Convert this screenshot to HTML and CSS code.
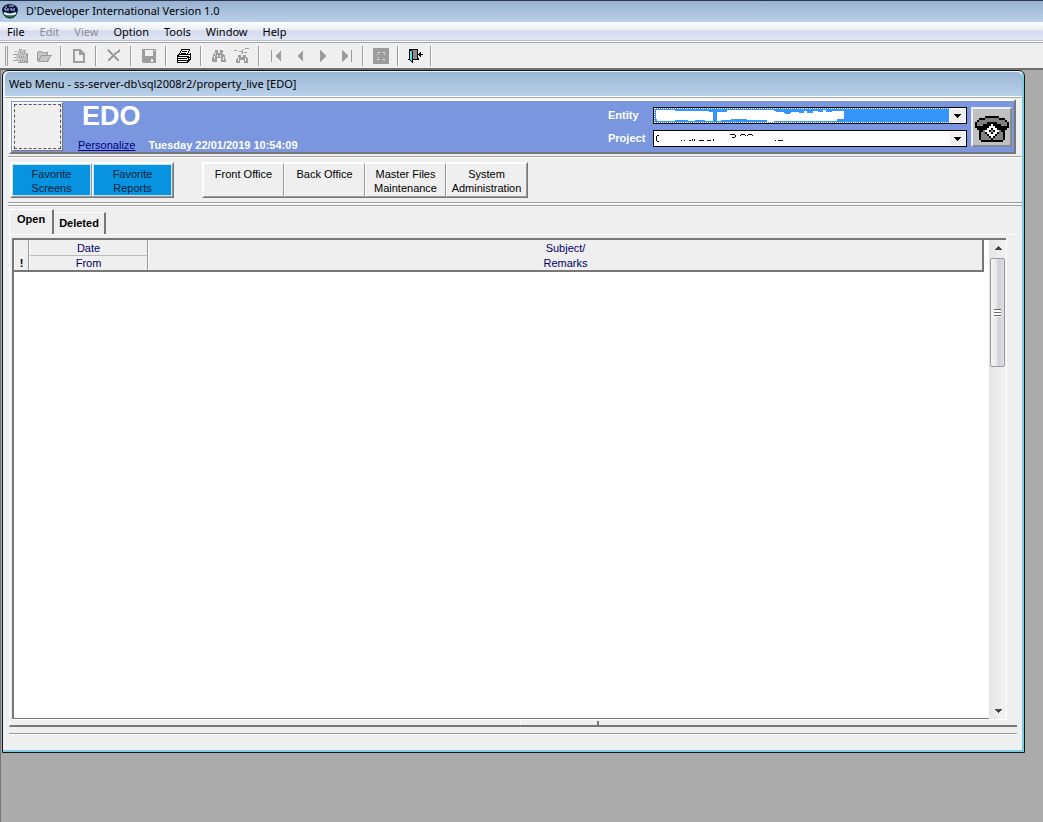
FILE: index.html
```html
<!DOCTYPE html>
<html lang="en">

<head>
  <meta charset="UTF-8">
  <title>D'Developer International Version 1.0</title>
  <link rel="stylesheet" href="styles.css">
</head>

<body>
  <header class="titlebar">
    <svg class="app-icon" width="18" height="16" viewBox="0 0 18 16">
      <ellipse cx="9" cy="7" rx="8" ry="6" fill="#0c1440"></ellipse>
      <path d="M2 10 Q9 15 16 10 Q14 15 9 15 Q4 15 2 10" fill="#1d7a45" stroke="#122" stroke-width="1"></path>
      <path d="M3 10 Q9 13 15 10" stroke="#e8f2fa" stroke-width="2" fill="none"></path>
      <path d="M4 4h2M8 3h5M3 6h2v2M7 5v3M9 6h2v2M13 5v3" stroke="#c3d8f5" fill="none"></path>
    </svg>
    <h1 class="titlebar__text">D'Developer International Version 1.0</h1>
  </header>

  <nav class="menubar">
    <button class="menubar__item">File</button>
    <button class="menubar__item" disabled>Edit</button>
    <button class="menubar__item" disabled>View</button>
    <button class="menubar__item">Option</button>
    <button class="menubar__item">Tools</button>
    <button class="menubar__item">Window</button>
    <button class="menubar__item">Help</button>
  </nav>

  <div class="toolbar">
    <span class="toolbar__grip"></span>
    <div class="toolbar__group">
      <button class="tool" aria-label="Run" disabled>
        <svg class="icon" viewBox="0 0 16 16">
          <path class="soft" d="M5 2h5v1h3v2h2v9H6v-1H4v-2H3V6h2z"></path>
          <path class="line" d="M2 3.5h2M0 6.5h4M1 9.5h2M0 12.5h5M6 1.5h3M5.5 5v2M7.5 3v2M9.5 5v2M11.5 4v2M13.5 6v2M6.5 8v2M8.5 8v2M10.5 8v2M12.5 9v2M7.5 12v2M9.5 11v2M11.5 12v2M13.5 12v2M5 14.5h10M10 2.5h3M14.5 5v9"></path>
        </svg>
      </button>
      <button class="tool" aria-label="Open" disabled>
        <svg class="icon" viewBox="0 0 16 16">
          <path class="soft" d="M1 4h4l1 1h5v3h4l-3 5H2z"></path>
          <path class="line" d="M1.5 13V4.5l1-1h3l1 1h4.500V7M2 13.5h9.500L15 7.500H5.500L2 13"></path>
        </svg>
      </button>
    </div>
    <div class="toolbar__group">
      <button class="tool" aria-label="New" disabled>
        <svg class="icon" viewBox="0 0 16 16"><path class="line heavy" d="M3 2h6l4 4v8H3zM9 2v4h4"></path></svg>
      </button>
    </div>
    <div class="toolbar__group">
      <button class="tool" aria-label="Delete" disabled>
        <svg class="icon" viewBox="0 0 16 16"><path class="line heavy" d="M2 2l6 6l5 5M14 2L8 7l-6 6"></path></svg>
      </button>
    </div>
    <div class="toolbar__group">
      <button class="tool" aria-label="Save" disabled>
        <svg class="icon" viewBox="0 0 16 16">
          <path class="solid" d="M1 1h14v14H2l-1-1z"></path>
          <path fill="#efefef" d="M4 2h8v6H4zM10 11h2v3h-2zM13 2h1v1h-1z"></path>
        </svg>
      </button>
    </div>
    <div class="toolbar__group">
      <button class="tool" aria-label="Print">
        <svg class="icon" viewBox="0 0 16 16">
          <path fill="#fff" stroke="#000" d="M5.500 1.500h8l-2 5h-8zM2.500 6.500h12v5h-2l-2 3h-9v-6z"></path>
          <path fill="none" stroke="#000" d="M6 3.500h5M5 5.500h5M1 8.500h11M2 10.500h9M2 12.500h9M12.500 8v5M14.500 5v6M11 14.500l4-4"></path>
          <path fill="#000" d="M3 14h9v1H3zM11 9h4v1h-4z"></path>
        </svg>
      </button>
    </div>
    <div class="toolbar__group">
      <button class="tool" aria-label="Find" disabled>
        <svg class="icon" viewBox="0 0 16 16">
          <path class="solid" d="M4 2h3v3h2V2h3v3l2 3 1 6h-5v-4H6v4H1v-3l1-4 2-3z"></path>
          <path fill="#efefef" d="M4 5h1v2H4zM3 8h1v3H3zM6 7h1v2H6zM9 7h1v2H9zM12 9h1v3h-1zM11 5h1v1h-1z"></path>
        </svg>
      </button>
      <button class="tool" aria-label="Find next" disabled>
        <svg class="icon" viewBox="0 0 16 16">
          <path class="solid" d="M4 7h3v2h2V7h3v2l2 2v4h-4v-3H6v3H2v-4l2-2z"></path>
          <path fill="#efefef" d="M4 10h1v3H4zM11 10h1v3h-1z"></path>
          <path class="line" d="M0 2.500h3M5 3.500h4M9 1.500h1M11 .500h4M7 5.500h2M8.500 2v4M10 4.500h3"></path>
        </svg>
      </button>
    </div>
    <div class="toolbar__group">
      <button class="tool" aria-label="First" disabled>
        <svg class="icon" viewBox="0 0 16 16"><path class="solid" d="M2 2h1v12H2zM12 2v12L6 8z"></path></svg>
      </button>
      <button class="tool" aria-label="Previous" disabled>
        <svg class="icon" viewBox="0 0 16 16"><path class="solid" d="M11 2v12L5 8z"></path></svg>
      </button>
      <button class="tool" aria-label="Next" disabled>
        <svg class="icon" viewBox="0 0 16 16"><path class="solid" d="M5 2v12l6-6z"></path></svg>
      </button>
      <button class="tool" aria-label="Last" disabled>
        <svg class="icon" viewBox="0 0 16 16"><path class="solid" d="M4 2v12l6-6zM13 2h1v12h-1z"></path></svg>
      </button>
    </div>
    <div class="toolbar__group">
      <button class="tool" aria-label="Options" disabled>
        <svg class="icon" viewBox="0 0 16 16">
          <path class="solid" d="M0 0h16v16H0z"></path>
          <path fill="#efefef" d="M5 4h2v1H5zM10 4h2v1h-2zM4 6h1v1H4zM11 6h1v1h-1zM5 9h1v1H5zM4 11h2v1H4zM10 11h2v1h-2z"></path>
        </svg>
      </button>
    </div>
    <div class="toolbar__group">
      <button class="tool" aria-label="Exit">
        <svg class="icon" viewBox="0 0 16 16">
          <path fill="#8b8b8b" stroke="#000" d="M2.500 1.500h7v10h-7z"></path>
          <path fill="#4de0df" stroke="#000" d="M1.500 1.500l3 2v11l-3-3z"></path>
          <path fill="#000" d="M0 11h2v1H0zM10 6h5v1h-5zM11 5h1v3h-1zM12 4h1v5h-1zM9 10h2v2H9z"></path>
        </svg>
      </button>
    </div>
  </div>

  <main class="workspace">
    <section class="window">
      <h2 class="window__title">Web Menu - ss-server-db\sql2008r2/property_live [EDO]</h2>

      <div class="banner">
        <button class="banner__photo" aria-label="Photo"></button>
        <div class="banner__user">
          <div class="banner__name">EDO</div>
          <div class="banner__info">
            <a class="banner__link" href="#">Personalize</a>
            <time class="banner__time" datetime="2019-01-22T10:54:09">Tuesday 22/01/2019 10:54:09</time>
          </div>
        </div>
        <div class="pickers">
          <label class="pickers__label" for="entity">Entity</label>
          <div class="picker">
            <select class="picker__select picker__select--active" id="entity"><option></option></select>
            <svg class="picker__mark" width="294" height="13" viewBox="0 0 294 13">
              <path fill="#fff" d="M1 1H20V2H54V3H58V12H50V11H40V12H33V11H20V12H2V10H1zM62 3H72V1H118L122 3H128L131 5H134L137 3H142L145 4H149V2H152V4H158V2H163V3H168V1H171V3H177V2H189V10H182V12H119V13H112V11H92V10H76V11H66V12H62z"></path>
            </svg>
            <svg class="picker__arrow" width="15" height="13" viewBox="0 0 15 13"><path d="M4 5h7v1h-1v1H9v1H8v1H7V8H6V7H5V6H4z"></path></svg>
          </div>
          <label class="pickers__label" for="project">Project</label>
          <div class="picker">
            <select class="picker__select" id="project"><option></option></select>
            <svg class="picker__mark" width="294" height="13" viewBox="0 0 294 13">
              <path fill="#000" d="M2 3h2v1H2zM1 4h1v5H1zM2 9h2v1H2zM26 8h1v1h-1zM29 8h1v1h-1zM34 8h2v1h-2zM37 7h1v2h-1zM39 7h1v2h-1zM44 8h5v1h-5zM52 8h4v1h-4zM58 7h1v2h-1zM75 2h5v1h-5zM80 3h1v2h-1zM77 5h3v1h-3zM86 2h4v1h-4zM85 3h1v1h-1zM90 3h1v1h-1zM93 2h4v1h-4zM92 3h1v1h-1zM97 3h1v1h-1zM120 8h1v1h-1zM123 8h5v1h-5z"></path>
            </svg>
            <svg class="picker__arrow" width="15" height="13" viewBox="0 0 15 13"><path d="M4 5h7v1h-1v1H9v1H8v1H7V8H6V7H5V6H4z"></path></svg>
          </div>
        </div>
        <button class="banner__phone" aria-label="Telephone">
          <svg width="34" height="26" viewBox="0 0 17 13">
            <path d="M5 0h7v1h3v1h1v1h1v3h-1v1h-1v5h-1v1H3v-1H2V7H1V6H0V3h1V2h1V1h3z"></path>
            <path fill="#808080" d="M5 1h7v1h3v1h1v2h-3V4h-2V3H6v1H4v1H1V3h1V2h3zM3 8h1V7h1v2h1v1h1v1h1v1H3zM14 8h-1V7h-1v2h-1v1h-1v1H9v1h5z"></path>
            <path fill="#fff" d="M8 4h1v1h1v1h1v1h1v1h-1v1h-1v1H9v1H8v-1H7V9H6V8H5V7h1V6h1V5h1z"></path>
            <path d="M8 6h1v1h1v1H9v1H8V8H7V7h1z"></path>
            <path fill="#aaa" d="M8 7h1v1H8z"></path>
          </svg>
        </button>
      </div>

      <div class="shortcuts">
        <div class="button-row">
          <button class="shortcut shortcut--blue">Favorite<br>Screens</button>
          <button class="shortcut shortcut--blue">Favorite<br>Reports</button>
        </div>
        <div class="button-row">
          <button class="shortcut">Front Office</button>
          <button class="shortcut">Back Office</button>
          <button class="shortcut">Master Files<br>Maintenance</button>
          <button class="shortcut">System<br>Administration</button>
        </div>
      </div>

      <div class="messages">
        <div class="tabs" role="tablist">
          <button class="tab tab--active" role="tab" aria-selected="true">Open</button>
          <button class="tab" role="tab" aria-selected="false">Deleted</button>
        </div>
        <div class="pane">
          <div class="grid">
            <div class="grid__body">
              <table class="grid__table">
                <thead>
                  <tr>
                    <th class="flag" rowspan="2">!</th>
                    <th class="date">Date</th>
                    <th>Subject/</th>
                  </tr>
                  <tr>
                    <th class="date date--from">From</th>
                    <th>Remarks</th>
                  </tr>
                </thead>
              </table>
            </div>
            <div class="scrollbar">
              <svg width="8" height="4" viewBox="0 0 8 4"><path fill="#444" d="M0 4l4-4 4 4z"></path></svg>
              <div class="scrollbar__thumb"></div>
              <svg class="scrollbar__down" width="8" height="4" viewBox="0 0 8 4"><path fill="#444" d="M0 0l4 4 4-4z"></path></svg>
            </div>
          </div>
          <div class="pane__ticks"></div>
        </div>
      </div>

      <footer class="status"></footer>
    </section>
  </main>
</body>

</html>
```
FILE: styles.css
```css
* {
  box-sizing: border-box;
}

body {
  background-color: #ababab;
  color: #000;
  display: flex;
  flex-direction: column;
  font-family: "Liberation Sans", Arial, sans-serif;
  font-size: 11px;
  line-height: 14px;
  margin: 0;
  min-height: 100vh;
}

button {
  background: none;
  border: 0;
  color: inherit;
  font: inherit;
  margin: 0;
  padding: 0;
}

svg {
  display: block;
  shape-rendering: crispEdges;
}

/* application frame */

.titlebar {
  align-items: center;
  background: linear-gradient(#98b2d1, #b9d0ea);
  border-top: 1px solid #26344c;
  display: flex;
  gap: 7px;
  height: 22px;
  padding: 0 1px 2px;
}

.app-icon {
  shape-rendering: auto;
}

.titlebar__text,
.window__title {
  font-family: "Noto Sans", "Open Sans", sans-serif;
  font-size: 11px;
  font-weight: normal;
  line-height: 16px;
  margin: 0;
}

.menubar {
  background: linear-gradient(#fff, #e8ecf6 45%, #d4daec 50%, #e1e6f4);
  border-bottom: 1px solid #b8bccb;
  display: flex;
  font-family: "Noto Sans", "Open Sans", sans-serif;
  font-size: 11px;
  gap: 15px;
  height: 19px;
  padding: 1px 7px 0;
}

.menubar__item:disabled {
  color: #8a8c94;
}

.toolbar {
  background-color: #efefef;
  border-bottom: 2px solid #6e6e6e;
  border-top: 1px solid #fff;
  box-shadow: inset 0 1px #a5a5a5;
  display: flex;
  height: 29px;
  padding: 4px 5px 2px;
}

.toolbar__grip {
  border-left: 1px solid #a0a0a0;
  border-right: 1px solid #a0a0a0;
  margin-right: 1px;
  width: 3px;
}

.toolbar__group {
  border-right: 1px solid #9b9b9b;
  box-shadow: 1px 0 #fff;
  display: flex;
  margin-right: 1px;
  padding: 0 5px;
}

.toolbar__grip + .toolbar__group {
  padding-left: 0;
}

.toolbar__group:last-child {
  padding-right: 3px;
}

.tool {
  align-items: center;
  display: flex;
  justify-content: center;
  width: 23px;
}

.icon {
  height: 16px;
  width: 16px;
}

.solid {
  fill: #9d9d9d;
}

.soft {
  fill: #c6c6c6;
}

.line {
  fill: none;
  stroke: #9d9d9d;
}

.heavy {
  stroke-width: 2;
}

.workspace {
  border-left: 1px solid #777;
  display: flex;
  flex: 1;
  padding: 0 18px 69px 1px;
}

/* child window */

.window {
  background-color: #efefef;
  border: 1px solid #10171f;
  border-radius: 6px 6px 0 0;
  box-shadow: inset -2px -2px #7fcbe0, inset 1px 1px #e4f2fb;
  display: flex;
  flex: 1;
  flex-direction: column;
  min-width: 0;
  padding: 1px 2px 2px;
}

.window__title {
  background: linear-gradient(#9bb5d4, #b9d1ea);
  border-bottom: 1px solid #fff;
  border-radius: 5px 5px 0 0;
  box-shadow: 0 1px #a9adb2;
  height: 25px;
  padding: 4px 4px 0;
}

.banner {
  align-items: center;
  background-color: #7a96df;
  border: 2px solid;
  border-color: #fff #777 #777 #fff;
  display: flex;
  height: 55px;
  margin: 2px 6px 0 4px;
  padding: 0 2px 0 1px;
}

.banner__photo {
  background-color: #efefef;
  border: 1px solid;
  border-color: #fff #777 #777 #fff;
  height: 49px;
  outline: 1px dashed #555;
  outline-offset: -3px;
  width: 51px;
}

.banner__user {
  align-self: stretch;
  display: flex;
  flex: 1;
  flex-direction: column;
  justify-content: space-between;
  padding-left: 15px;
}

.banner__name {
  color: #fff;
  font-size: 27px;
  font-weight: bold;
  line-height: 30px;
  padding-left: 4px;
}

.banner__info {
  display: flex;
  gap: 13px;
}

.banner__link {
  color: #000080;
}

.banner__time,
.pickers__label {
  color: #fff;
  font-weight: bold;
}

.pickers__label {
  padding-top: 1px;
}

.pickers {
  display: grid;
  gap: 6px 5px;
  grid-template-columns: 40px 314px;
  margin-right: 4px;
}

.picker {
  height: 17px;
  position: relative;
}

.picker__select {
  appearance: none;
  background-color: #fff;
  border: 1px solid #000;
  border-radius: 0;
  display: block;
  font: inherit;
  height: 17px;
  padding: 0 17px 0 2px;
  width: 100%;
}

.picker__select--active {
  background-color: #3595fb;
  outline: 1px dotted #fff;
  outline-offset: -2px;
}

.picker__mark {
  left: 2px;
  pointer-events: none;
  position: absolute;
  top: 2px;
}

.picker__arrow {
  background-color: #efefef;
  box-shadow: 0 0 0 1px #fff;
  pointer-events: none;
  position: absolute;
  right: 2px;
  top: 2px;
}

.banner__phone {
  align-items: center;
  background-color: #c0c0c0;
  border: 2px solid;
  border-color: #efefef #8b8b8b #8b8b8b #efefef;
  display: flex;
  height: 40px;
  justify-content: center;
  padding-top: 4px;
  width: 41px;
}

.shortcuts {
  border-bottom: 1px solid #999;
  border-top: 1px solid #a5a5a5;
  box-shadow: inset 0 1px #fff, 0 1px #fff, 0 2px #efefef, 0 3px #a5a5a5;
  display: flex;
  gap: 28px;
  margin: 2px 0 0 3px;
  padding: 5px 2px 4px;
}

.button-row {
  border: 1px solid;
  border-color: #fff #777 #777 #fff;
  display: flex;
}

.shortcut {
  border: 1px solid;
  border-color: #fff #999 #999 #fff;
  display: flex;
  height: 34px;
  justify-content: center;
  padding: 3px 0 0;
  text-align: center;
  width: 81px;
}

.shortcut--blue {
  background-color: #0793df;
  box-shadow: inset 0 0 0 1px #c2e6f8;
  color: #06203a;
}

.messages {
  display: flex;
  flex: 1;
  flex-direction: column;
  padding: 6px 5px 0 4px;
}

.tabs {
  align-items: flex-end;
  display: flex;
  font-weight: bold;
}

.tab {
  border-right: 2px solid #777;
  border-top: 1px solid #fff;
  height: 22px;
  padding: 0 5px 2px;
}

.tab--active {
  border-left: 1px solid #fff;
  height: 25px;
  padding: 0 7px 6px;
}

.pane {
  border-bottom: 2px solid #777;
  border-left: 1px solid #fff;
  border-top: 1px solid #fff;
  display: flex;
  flex: 1;
  flex-direction: column;
  padding: 3px 10px 0 2px;
}

.grid {
  border-bottom: 1px solid #fff;
  border-right: 1px solid #fff;
  display: flex;
  flex: 1;
}

.grid__body {
  background-color: #fff;
  border: 2px solid #777;
  border-bottom-width: 1px;
  border-right: 0;
  flex: 1;
  padding-right: 5px;
}

.grid__table {
  background-color: #efefef;
  border-bottom: 2px solid #777;
  border-right: 2px solid #777;
  border-spacing: 0;
  color: #000066;
  table-layout: fixed;
  width: 100%;
}

.grid__table th {
  border-left: 1px solid #fff;
  font-weight: normal;
  height: 15px;
  padding: 0;
}

.grid__table .flag {
  border-right: 1px solid #999;
  color: #000;
  font-weight: bold;
  vertical-align: bottom;
  width: 15px;
}

.grid__table .date {
  border-right: 1px solid #999;
  width: 119px;
}

.grid__table .date--from {
  border-top: 1px solid #bbb;
}

.scrollbar {
  align-items: center;
  background: linear-gradient(to right, #e5e5e5, #f3f3f3);
  border-top: 2px solid #777;
  display: flex;
  flex-direction: column;
  padding: 6px 1px;
  width: 17px;
}

.scrollbar__thumb {
  align-items: center;
  background: linear-gradient(to right, #f6f6f6, #e7e7e9 45%, #cfcfd4 55%, #dfdfe2);
  border: 1px solid #999;
  border-radius: 2px;
  display: flex;
  height: 109px;
  justify-content: center;
  margin-top: 8px;
  width: 15px;
}

.scrollbar__thumb::before {
  background: repeating-linear-gradient(#666 0 1px, #fff 1px 3px);
  content: "";
  height: 8px;
  width: 7px;
}

.scrollbar__down {
  margin-top: auto;
}

.pane__ticks {
  background: linear-gradient(#fff, #fff) 87% 0 / 1px 100% no-repeat;
  border-right: 2px solid #777;
  height: 4px;
  margin-top: 1px;
  width: 59%;
}

.status {
  border-bottom: 1px solid #efefef;
  border-top: 1px solid #999;
  box-shadow: inset 0 1px #fff;
  height: 17px;
  margin: 6px 5px 0 4px;
}
```
